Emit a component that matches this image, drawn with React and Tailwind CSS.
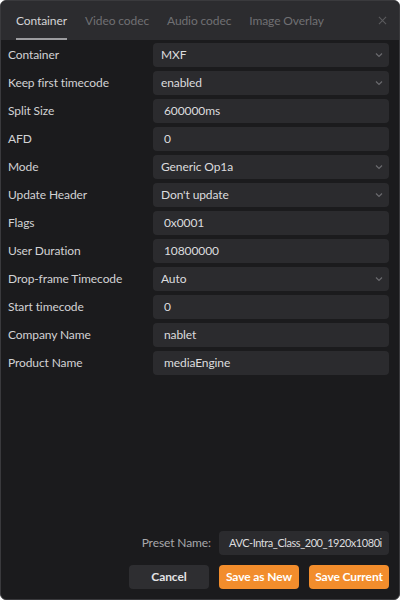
import React, { useState } from "react";

const tabs = ["Container", "Video codec", "Audio codec", "Image Overlay"];

const fields = [
  { label: "Container", value: "MXF", select: true },
  { label: "Keep first timecode", value: "enabled", select: true },
  { label: "Split Size", value: "600000ms" },
  { label: "AFD", value: "0" },
  { label: "Mode", value: "Generic Op1a", select: true },
  { label: "Update Header", value: "Don't update", select: true },
  { label: "Flags", value: "0x0001" },
  { label: "User Duration", value: "10800000" },
  { label: "Drop-frame Timecode", value: "Auto", select: true },
  { label: "Start timecode", value: "0" },
  { label: "Company Name", value: "nablet" },
  { label: "Product Name", value: "mediaEngine" },
];

const Chevron = () => (
  <svg className="w-[10px] h-[10px] text-[#6a6a6e]" viewBox="0 0 10 10" fill="none" stroke="currentColor" strokeWidth="1.2">
    <path d="M2 3.5 L5 6.5 L8 3.5" />
  </svg>
);

const FieldRow = ({ label, value, select }) => (
  <div className="flex items-center h-[24px]">
    <div className="w-[145px] shrink-0 text-[#d2d2d4]">{label}</div>
    <div
      className={`flex-1 h-[24px] rounded-[4px] bg-[#2b2b2e] flex items-center justify-between text-[#dcdcde] ${
        select ? "pl-[8px] pr-[5px]" : "pl-[11px]"
      }`}
    >
      <span>{value}</span>
      {select && <Chevron />}
    </div>
  </div>
);

export default function App() {
  const [active, setActive] = useState(0);

  return (
    <div
      className="w-[400px] h-[600px] flex flex-col bg-[#1b1b1d] rounded-[6px] border border-[#3a3a3d] overflow-hidden text-[12px] tracking-[-0.1px]"
      style={{ fontFamily: 'Lato, "Noto Sans", sans-serif' }}
    >
      {/* tab strip */}
      <div className="h-[39px] shrink-0 bg-[#2c2c2f] flex items-stretch pl-[15px] pr-[12px]">
        {tabs.map((t, i) => (
          <button
            key={t}
            onClick={() => setActive(i)}
            className={`relative shrink-0 whitespace-nowrap mr-[18px] flex items-center ${
              i === active ? "text-[#d4d4d6]" : "text-[#707073]"
            }`}
          >
            {t}
            {i === active && (
              <span className="absolute left-0 right-0 bottom-0 h-[2px] bg-[#9c9c9f]" />
            )}
          </button>
        ))}
        <div className="ml-auto flex items-center text-[#5a5a5d]">
          <svg className="w-[9px] h-[9px]" viewBox="0 0 10 10" stroke="currentColor" strokeWidth="1.2">
            <path d="M1 1 L9 9 M9 1 L1 9" />
          </svg>
        </div>
      </div>

      {/* settings list */}
      <div className="flex-1 flex flex-col gap-[4px] pt-[3px] pl-[7px] pr-[10px]">
        {fields.map((f) => (
          <FieldRow key={f.label} {...f} />
        ))}
      </div>

      {/* footer */}
      <div className="shrink-0 flex flex-col items-end gap-[10px] pr-[10px] pb-[10px]">
        <div className="flex items-center gap-[8px]">
          <span className="text-[#a8a8ab]">Preset Name:</span>
          <div className="w-[170px] h-[24px] rounded-[4px] bg-[#2b2b2e] flex items-center pl-[10px] text-[11px] tracking-[-0.45px] text-[#dcdcde] overflow-hidden whitespace-nowrap">
            AVC-Intra_Class_200_1920x1080i
          </div>
        </div>
        <div className="flex gap-[10px] font-bold">
          <button className="w-[80px] h-[24px] rounded-[4px] bg-[#2e2e31] text-[#e4e4e6]">Cancel</button>
          <button className="w-[80px] h-[24px] rounded-[4px] bg-[#f28d2c] text-white">Save as New</button>
          <button className="w-[80px] h-[24px] rounded-[4px] bg-[#f28d2c] text-white">Save Current</button>
        </div>
      </div>
    </div>
  );
}
